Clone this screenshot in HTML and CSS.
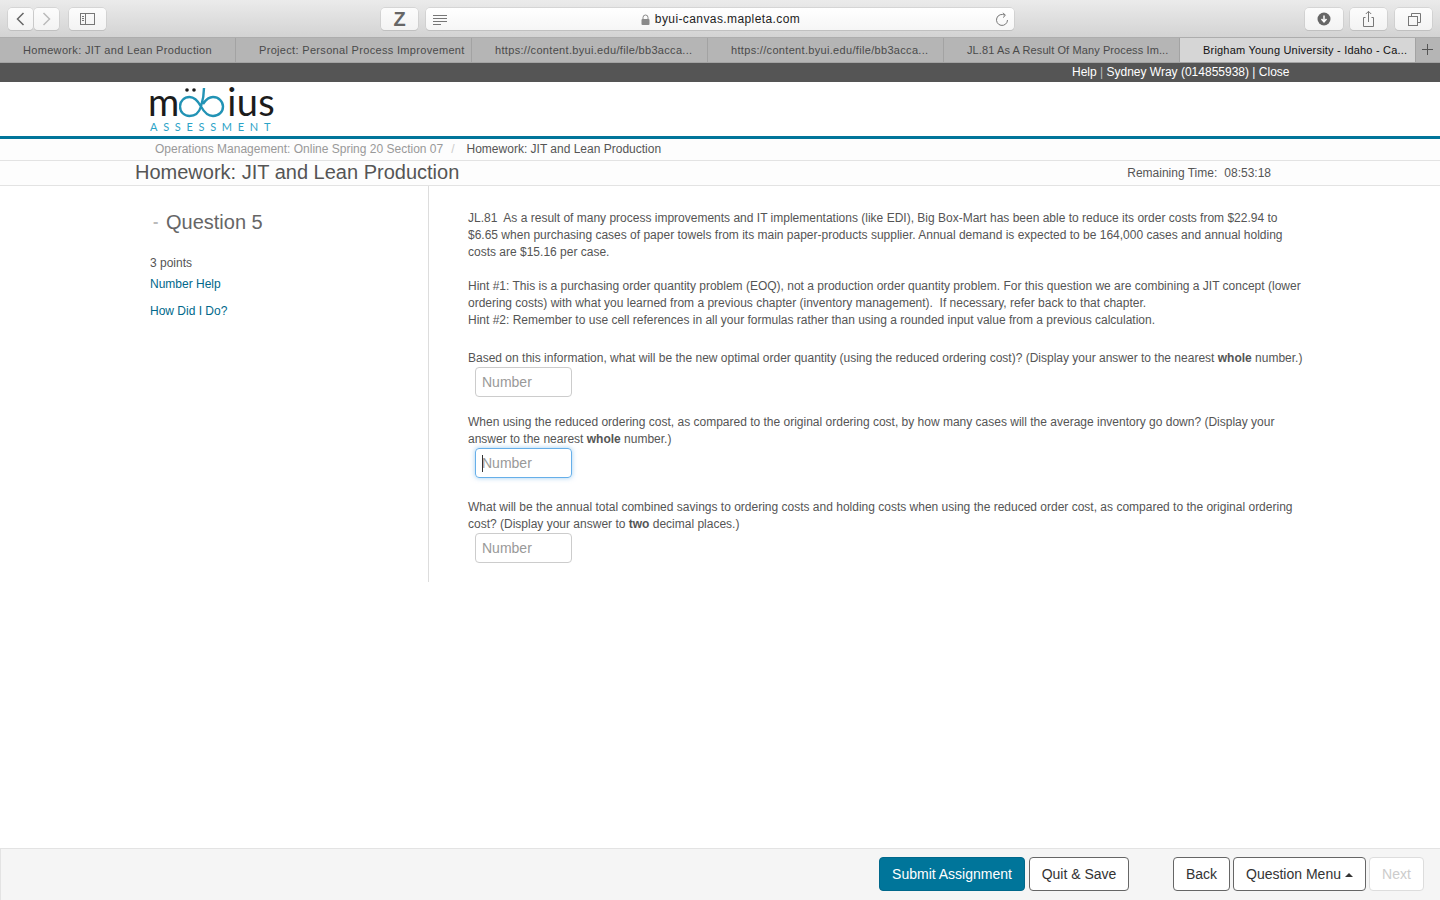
FILE: index.html
```html
<!DOCTYPE html>
<html lang="en">

<head>
    <meta charset="UTF-8">
    <meta name="viewport" content="width=device-width, initial-scale=1.0">
    <title>Homework: JIT and Lean Production</title>
    <link rel="stylesheet" href="styles.css">
</head>

<body>
    <!-- browser chrome -->
    <div class="toolbar">
        <div class="tool nav">
            <svg width="25" height="22" viewBox="0 0 25 22"><path d="M15.500 5 9.500 11l6 6" class="stroke dark" /></svg>
        </div>
        <div class="tool nav next">
            <svg width="25" height="22" viewBox="0 0 25 22"><path d="M9.500 5l6 6-6 6" class="stroke pale" /></svg>
        </div>
        <div class="tool side">
            <svg width="37" height="22" viewBox="0 0 37 22">
                <rect x="11.500" y="5.500" width="14" height="11" class="stroke mid" />
                <path d="M16.500 5.500v11M13 8.500h2M13 10.500h2M13 12.500h2" class="stroke mid" />
            </svg>
        </div>
        <div class="tool zed">Z</div>
        <div class="address">
            <svg class="lines" width="16" height="12" viewBox="0 0 16 12"><path d="M1 2.500h14M1 5.500h14M1 8.500h14M1 11.500h8" class="stroke mid" /></svg>
            <div class="url">
                <svg width="9" height="11" viewBox="0 0 9 11">
                    <path d="M2 5V3.500a2.500 2.500 0 0 1 5 0V5" class="stroke lock" />
                    <rect x="0.500" y="5" width="8" height="6" rx="1" fill="#8a8a8a" />
                </svg>
                <span>byui-canvas.mapleta.com</span>
            </div>
            <svg class="reload" width="14" height="15" viewBox="0 0 14 15"><path d="M9.800 3.200A5.500 5.500 0 1 0 12.500 8M8 .8l2.400 2.500L8 5.600" class="stroke mid" /></svg>
        </div>
        <div class="tool first">
            <svg width="38" height="22" viewBox="0 0 38 22">
                <circle cx="19" cy="11" r="6.500" fill="#666" />
                <path d="M19 7.500v6M16.500 11l2.500 2.800 2.500-2.800" class="stroke white" />
            </svg>
        </div>
        <div class="tool share">
            <svg width="37" height="22" viewBox="0 0 37 22">
                <path d="M15.500 9.500H13.500v9h10v-9h-2M18.500 14V3.500M15.800 6l2.700-2.700L21.200 6" class="stroke mid" />
            </svg>
        </div>
        <div class="tool copies">
            <svg width="37" height="22" viewBox="0 0 37 22">
                <rect x="13.500" y="8.500" width="9" height="9" class="stroke mid" />
                <path d="M16.500 8.500v-3h9v9h-3" class="stroke mid" />
            </svg>
        </div>
    </div>

    <div class="tabs">
        <div class="tab">Homework: JIT and Lean Production</div>
        <div class="tab">Project: Personal Process Improvement</div>
        <div class="tab">https://content.byui.edu/file/bb3acca...</div>
        <div class="tab">https://content.byui.edu/file/bb3acca...</div>
        <div class="tab tight">JL.81 As A Result Of Many Process Im...</div>
        <div class="tab active">Brigham Young University - Idaho - Ca...</div>
        <div class="tab plus">
            <svg width="11" height="11" viewBox="0 0 11 11"><path d="M5.500 0v11M0 5.500h11" class="stroke plusline" /></svg>
        </div>
    </div>

    <!-- page -->
    <div class="topbar">
        <span>Help <i>|</i> Sydney Wray (014855938) <b>|</b> Close</span>
    </div>

    <header class="brand">
        <div class="logo">
            <div class="word">
                <span>m</span>
                <svg width="48" height="32" viewBox="0 0 48 32">
                    <circle cx="8" cy="4" r="1.800" fill="#1c1c1c" />
                    <circle cx="15" cy="4" r="1.800" fill="#1c1c1c" />
                    <path d="M25 2c0 8-1 12-3 18.500S16 30 10.500 30 1 25.800 1 20.500 5.200 11 10.500 11 19 15 22 20.500s6 9.500 12 9.500 10-4.300 10-9.500S39.500 11 34 11 26 15 24 18" class="infinity" />
                </svg>
                <span class="ius">ius</span>
            </div>
            <div class="tagline">ASSESSMENT</div>
        </div>
    </header>

    <div class="crumbs">
        <a>Operations Management: Online Spring 20 Section 07</a>
        <em>/</em>
        <span>Homework: JIT and Lean Production</span>
    </div>

    <div class="titlebar">
        <h1>Homework: JIT and Lean Production</h1>
        <div class="timer"><span>Remaining Time:</span><span>08:53:18</span></div>
    </div>

    <div class="content">
        <div class="left">
            <h2><span class="dash">-</span>Question 5</h2>
            <p class="points">3 points</p>
            <a class="help">Number Help</a>
            <a class="did">How Did I Do?</a>
        </div>
        <div class="main">
            <p>JL.81&nbsp; As a result of many process improvements and IT implementations (like EDI), Big Box-Mart has been able to reduce its order costs from $22.94 to<br>$6.65 when purchasing cases of paper towels from its main paper-products supplier. Annual demand is expected to be 164,000 cases and annual holding<br>costs are $15.16 per case.</p>
            <p class="hint">Hint #1: This is a purchasing order quantity problem (EOQ), not a production order quantity problem. For this question we are combining a JIT concept (lower<br>ordering costs) with what you learned from a previous chapter (inventory management).&nbsp; If necessary, refer back to that chapter.<br>Hint #2: Remember to use cell references in all your formulas rather than using a rounded input value from a previous calculation.</p>
            <p class="q one">Based on this information, what will be the new optimal order quantity (using the reduced ordering cost)? (Display your answer to the nearest <b>whole</b> number.)</p>
            <div class="field">Number</div>
            <p class="q two">When using the reduced ordering cost, as compared to the original ordering cost, by how many cases will the average inventory go down? (Display your<br>answer to the nearest <b>whole</b> number.)</p>
            <div class="field focus"><u></u>Number</div>
            <p class="q three">What will be the annual total combined savings to ordering costs and holding costs when using the reduced order cost, as compared to the original ordering<br>cost? (Display your answer to <b>two</b> decimal places.)</p>
            <div class="field">Number</div>
        </div>
    </div>

    <footer>
        <button class="btn primary">Submit Assignment</button>
        <button class="btn quit">Quit &amp; Save</button>
        <button class="btn back">Back</button>
        <button class="btn menu">Question Menu<s></s></button>
        <button class="btn off">Next</button>
    </footer>
</body>

</html>
```

FILE: styles.css
```css
* {
    margin: 0;
    padding: 0;
    box-sizing: border-box;
}

html,
body {
    height: 100%;
}

body {
    display: flex;
    flex-direction: column;
    overflow: hidden;
    background-color: #fff;
    color: #555;
    font-family: "Liberation Sans", Arial, sans-serif;
    font-size: 12px;
}

svg {
    display: block;
}

.stroke {
    fill: none;
    stroke-width: 1;
}

.dark {
    stroke: #666;
    stroke-width: 1.500;
}

.pale {
    stroke: #bbb;
    stroke-width: 1.500;
}

.mid {
    stroke: #777;
}

.plusline {
    stroke: #555;
}

.lock {
    stroke: #8a8a8a;
}

.white {
    stroke: #fff;
    stroke-width: 1.500;
}

/* browser chrome */
.toolbar {
    flex: 0 0 38px;
    display: flex;
    padding: 8px 8px 0;
    background: linear-gradient(#ebebeb, #d3d3d3);
    border-bottom: 1px solid #adadad;
}

.tool {
    height: 22px;
    background: linear-gradient(#fcfcfc, #f3f3f3);
    border-radius: 4px;
    box-shadow: 0 0 0 0.5px #c4c4c4, 0 1px 0 #bdbdbd;
}

.nav {
    width: 25px;
}

.next {
    margin-left: 1px;
}

.side {
    width: 37px;
    margin-left: 10px;
}

.zed {
    width: 37px;
    margin-left: 275px;
    color: #666;
    font-size: 20px;
    font-weight: bold;
    line-height: 22px;
    text-align: center;
}

.address {
    width: 588px;
    height: 22px;
    margin-left: 8px;
    padding: 0 5px 0 6px;
    display: grid;
    grid-template-columns: 1fr auto 1fr;
    align-items: center;
    background: linear-gradient(#fff, #f6f6f6);
    border-radius: 4px;
    box-shadow: 0 0 0 0.5px #c4c4c4, 0 1px 0 #bdbdbd;
}

.url {
    display: flex;
    align-items: center;
    gap: 5px;
    color: #222;
    font-size: 12px;
    letter-spacing: 0.4px;
}

.reload {
    justify-self: end;
}

.first {
    width: 38px;
    margin-left: 291px;
}

.share {
    width: 37px;
    margin-left: 7px;
}

.copies {
    width: 37px;
    margin-left: 8px;
}

.tabs {
    flex: 0 0 25px;
    display: flex;
    background-color: #b5b5b5;
    border-bottom: 1px solid #a3a3a3;
}

.tab {
    flex: 0 0 236px;
    padding: 0 8px 0 23px;
    border-right: 1px solid #a3a3a3;
    color: #4a4a4a;
    font-size: 11px;
    letter-spacing: 0.32px;
    line-height: 24px;
    white-space: nowrap;
    overflow: hidden;
}

.tight {
    letter-spacing: 0.1px;
}

.active {
    background-color: #d6d6d6;
    color: #111;
    letter-spacing: 0.2px;
}

.plus {
    flex: 1;
    padding: 6px 0 0 6px;
    border-right: 0;
}

/* page */
.topbar {
    flex: 0 0 19px;
    padding-left: 1072px;
    background-color: #555;
    color: #fff;
    font-size: 12px;
    line-height: 18px;
}

.topbar i {
    color: #bbb;
    font-style: normal;
}

.topbar b {
    font-weight: normal;
}

.brand {
    flex: 0 0 57px;
    padding-left: 148px;
    border-bottom: 3px solid #00759a;
}

.logo {
    width: 130px;
}

.word {
    display: flex;
    align-items: flex-end;
    height: 36px;
    color: #1c1c1c;
    font-family: Lato, "Liberation Sans", sans-serif;
    font-size: 38px;
    font-weight: 400;
    line-height: 34px;
}

.ius {
    letter-spacing: 0.3px;
}

.infinity {
    fill: none;
    stroke: #2293b5;
    stroke-width: 2.400;
}

.tagline {
    margin: 3px 0 0 2px;
    color: #2ba3c7;
    font-family: Lato, "Liberation Sans", sans-serif;
    font-size: 11px;
    letter-spacing: 5.700px;
    line-height: 11px;
    white-space: nowrap;
}

.crumbs {
    flex: 0 0 22px;
    display: flex;
    padding-left: 155px;
    background-color: #fdfdfd;
    border-bottom: 1px solid #e3e3e3;
    line-height: 20px;
    white-space: nowrap;
}

.crumbs a {
    color: #999;
}

.crumbs em {
    margin: 0 12px 0 8px;
    color: #ccc;
    font-style: normal;
}

.titlebar {
    flex: 0 0 25px;
    display: flex;
    justify-content: space-between;
    padding: 0 169px 0 135px;
    background-color: #fdfdfd;
    border-bottom: 1px solid #e3e3e3;
}

h1 {
    color: #555;
    font-size: 20px;
    font-weight: normal;
    line-height: 22px;
}

.timer {
    display: flex;
    gap: 7px;
    padding-top: 1px;
    line-height: 22px;
}

.content {
    display: flex;
    align-items: flex-start;
}

.left {
    flex: 0 0 429px;
    height: 396px;
    padding: 24px 0 0 150px;
    border-right: 1px solid #ddd;
}

h2 {
    color: #666;
    font-size: 20px;
    font-weight: normal;
    line-height: 24px;
}

.dash {
    display: inline-block;
    width: 16px;
    padding-left: 3px;
    color: #bbb;
    font-size: 16px;
    font-weight: bold;
    vertical-align: 2px;
}

.points {
    margin-top: 21px;
    line-height: 17px;
}

.left a {
    display: block;
    color: #00688b;
    line-height: 17px;
}

.help {
    margin-top: 4px;
}

.did {
    margin-top: 10px;
}

.main {
    padding: 24px 0 0 39px;
    line-height: 17px;
    white-space: nowrap;
}

.hint {
    margin-top: 17px;
}

.one {
    margin-top: 21px;
}

.two {
    margin-top: 17px;
}

.three {
    margin-top: 21px;
}

.field {
    position: relative;
    width: 97px;
    height: 30px;
    margin-left: 7px;
    padding-left: 6px;
    border: 1px solid #ccc;
    border-radius: 4px;
    color: #999;
    font-size: 14px;
    line-height: 28px;
}

.focus {
    border-color: #66afe9;
    box-shadow: 0 0 5px rgba(102, 175, 233, 0.6);
}

.focus u {
    position: absolute;
    left: 6px;
    top: 6px;
    width: 1px;
    height: 17px;
    background-color: #333;
}

footer {
    flex: 0 0 52px;
    margin-top: auto;
    display: flex;
    align-items: flex-start;
    padding: 8px 16px 0 878px;
    background-color: #f5f5f5;
    border-top: 1px solid #e3e3e3;
    border-left: 1px solid #e3e3e3;
}

.btn {
    height: 34px;
    background-color: #fff;
    border: 1px solid #666;
    border-radius: 4px;
    color: #333;
    font-family: "Liberation Sans", Arial, sans-serif;
    font-size: 14px;
}

.primary {
    width: 146px;
    background-color: #00759a;
    border-color: #00688b;
    color: #fff;
}

.quit {
    width: 100px;
    margin-left: 4px;
}

.back {
    width: 57px;
    margin-left: 44px;
}

.menu {
    width: 133px;
    margin-left: 3px;
}

.menu s {
    display: inline-block;
    margin-left: 4px;
    border: 4px solid transparent;
    border-top: 0;
    border-bottom-color: #333;
    vertical-align: 2px;
}

.off {
    width: 55px;
    margin-left: 3px;
    border-color: #ddd;
    color: #ccc;
}
```
